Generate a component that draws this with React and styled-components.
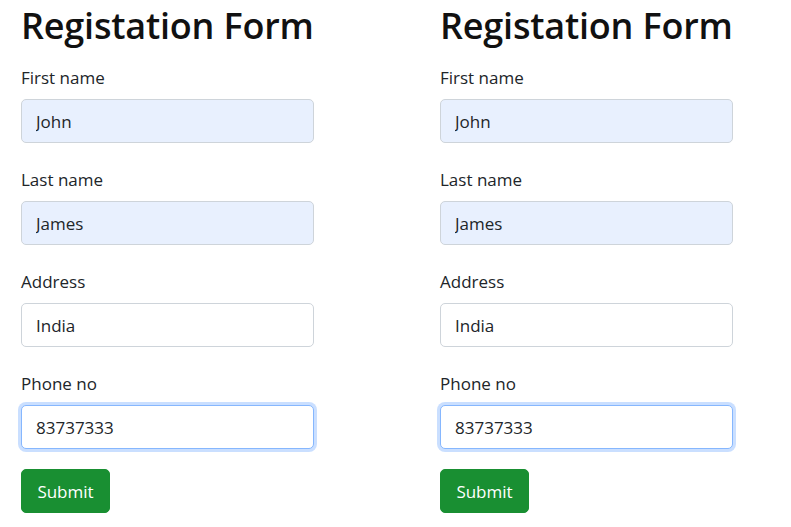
import styled, { createGlobalStyle } from "styled-components";

const GlobalStyle = createGlobalStyle`
  body {
    margin: 0;
    background: #ffffff;
    font-family: "Open Sans", "Noto Sans", Arial, sans-serif;
    color: #212529;
  }
`;

const Page = styled.div`
  display: grid;
  grid-template-columns: 419px 351px;
  padding: 5px 0 0 21px;
`;

const Form = styled.form`
  display: flex;
  flex-direction: column;
`;

const Title = styled.h1`
  margin: 0 0 19px;
  font-size: 36px;
  line-height: 42px;
  font-weight: 600;
  letter-spacing: -0.2px;
  color: #111;
`;

const Group = styled.div`
  display: flex;
  flex-direction: column;
  gap: 9px;
  margin-bottom: 25px;
`;

const Label = styled.label`
  font-size: 17px;
  line-height: 24px;
  color: #212529;
`;

const Input = styled.input`
  box-sizing: border-box;
  width: 293px;
  height: 44px;
  padding: 0 14px;
  font-family: inherit;
  font-size: 17px;
  color: #212529;
  background: ${(p) => (p.$filled ? "#e8f0fe" : "#ffffff")};
  border: 1px solid ${(p) => (p.$focus ? "#86b7fe" : "#ced4da")};
  border-radius: 5px;
  box-shadow: ${(p) => (p.$focus ? "0 0 0 3px rgba(13,110,253,0.22)" : "none")};
  outline: none;
`;

const Button = styled.button`
  width: 89px;
  height: 44px;
  margin-top: -5px;
  font-family: inherit;
  font-size: 17px;
  color: #ffffff;
  background: #198f32;
  border: 1px solid #198f32;
  border-radius: 5px;
  text-align: center;
`;

const fields = [
  { label: "First name", value: "John", filled: true },
  { label: "Last name", value: "James", filled: true },
  { label: "Address", value: "India" },
  { label: "Phone no", value: "83737333", focus: true },
];

function RegForm() {
  return (
    <Form onSubmit={(e) => e.preventDefault()}>
      <Title>Registation Form</Title>
      {fields.map((f) => (
        <Group key={f.label}>
          <Label>{f.label}</Label>
          <Input
            defaultValue={f.value}
            $filled={f.filled}
            $focus={f.focus}
          />
        </Group>
      ))}
      <Button type="submit">Submit</Button>
    </Form>
  );
}

export default function App() {
  return (
    <>
      <GlobalStyle />
      <Page>
        <RegForm />
        <RegForm />
      </Page>
    </>
  );
}
